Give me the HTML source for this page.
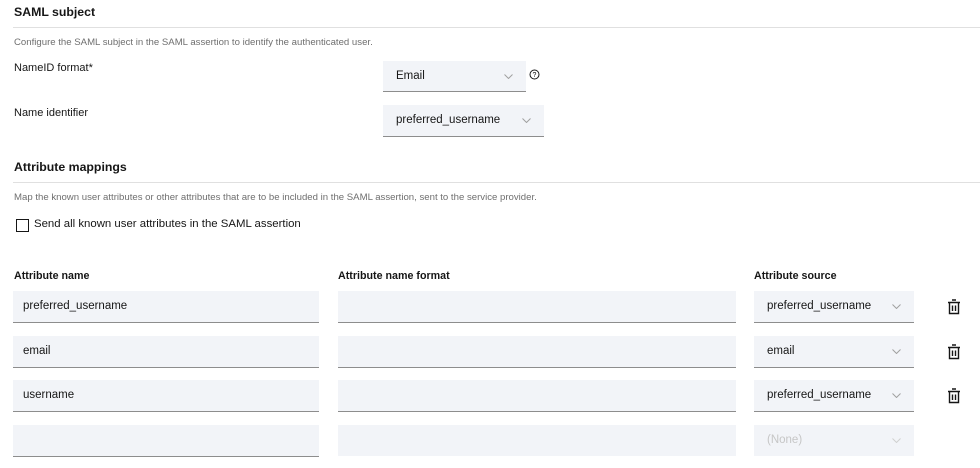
<!DOCTYPE html><html><head><style>
body{margin:0;width:980px;height:468px;background:#fff;font-family:"Liberation Sans",sans-serif;color:#161616;position:relative;overflow:hidden}
.a{position:absolute;white-space:nowrap}
.h{font-size:12.3px;font-weight:bold}
.d{font-size:9.6px;color:#6f6f6f}
.l{font-size:11px;color:#161616}
.hr{position:absolute;left:13px;right:0;height:1px;background:#e0e0e0}
.f{position:absolute;background:#f2f4f8;border-bottom:1px solid #8d8d8d;box-sizing:border-box;font-size:11.5px;line-height:31px;padding-left:10px}
.s{padding-left:13px}
.f svg{position:absolute;right:13px;top:13px}
.nb{border-bottom:none}
.t{position:absolute;left:947px}
</style></head><body>
<div class="a h" style="left:14px;top:5px">SAML subject</div>
<div class="hr" style="top:27px"></div>
<div class="a d" style="left:14px;top:37px">Configure the SAML subject in the SAML assertion to identify the authenticated user.</div>
<div class="a l" style="left:14px;top:62px">NameID format*</div>
<div class="f s" style="left:383px;top:61px;width:143px;height:31px">Email<svg width="9" height="5"><path d="M.5.5l4 4 4-4" fill="none" stroke="#a0a0a0"/></svg></div>
<svg class="a" style="left:529px;top:69px" width="11" height="11"><circle cx="5.5" cy="5.5" r="4.5" fill="none" stroke="#161616"/><text x="5.5" y="8" font-size="7" text-anchor="middle" font-family="Liberation Sans">?</text></svg>
<div class="a l" style="left:14px;top:107px">Name identifier</div>
<div class="f s" style="left:383px;top:105px;width:161px;height:32px">preferred_username<svg width="9" height="5"><path d="M.5.5l4 4 4-4" fill="none" stroke="#a0a0a0"/></svg></div>
<div class="a h" style="left:14px;top:160px">Attribute mappings</div>
<div class="hr" style="top:182px"></div>
<div class="a d" style="left:14px;top:192px">Map the known user attributes or other attributes that are to be included in the SAML assertion, sent to the service provider.</div>
<div class="a" style="left:16px;top:219px;width:11px;height:11px;border:1px solid #161616"></div>
<div class="a l" style="left:34px;top:218px;font-size:11.4px">Send all known user attributes in the SAML assertion</div>
<div class="a l" style="left:14px;top:270px;font-weight:bold;font-size:10.7px">Attribute name</div>
<div class="a l" style="left:338px;top:270px;font-weight:bold;font-size:10.7px">Attribute name format</div>
<div class="a l" style="left:754px;top:270px;font-weight:bold;font-size:10.7px">Attribute source</div>

<div class="f" style="left:13px;top:291px;width:306px;height:32px">preferred_username</div>
<div class="f" style="left:338px;top:291px;width:398px;height:32px"></div>
<div class="f s" style="left:754px;top:291px;width:160px;height:32px">preferred_username<svg width="9" height="5"><path d="M.5.5l4 4 4-4" fill="none" stroke="#a0a0a0"/></svg></div>

<div class="f" style="left:13px;top:336px;width:306px;height:32px">email</div>
<div class="f" style="left:338px;top:336px;width:398px;height:32px"></div>
<div class="f s" style="left:754px;top:336px;width:160px;height:32px">email<svg width="9" height="5"><path d="M.5.5l4 4 4-4" fill="none" stroke="#a0a0a0"/></svg></div>

<div class="f" style="left:13px;top:380px;width:306px;height:32px">username</div>
<div class="f" style="left:338px;top:380px;width:398px;height:32px"></div>
<div class="f s" style="left:754px;top:380px;width:160px;height:32px">preferred_username<svg width="9" height="5"><path d="M.5.5l4 4 4-4" fill="none" stroke="#a0a0a0"/></svg></div>

<div class="f" style="left:13px;top:425px;width:306px;height:32px"></div>
<div class="f nb" style="left:338px;top:425px;width:398px;height:31px"></div>
<div class="f s nb" style="left:754px;top:425px;width:160px;height:31px;color:#c6c6c6">(None)<svg width="9" height="5"><path d="M.5.5l4 4 4-4" fill="none" stroke="#d0d0d0"/></svg></div>

<svg class="t" style="top:299px" width="14" height="16"><path d="M5 1h4M1 3.5h12M2.5 4v10.5h9V4M5.5 6.5v5.5M8.5 6.5v5.5" fill="none" stroke="#161616" stroke-width="1.4"/></svg>
<svg class="t" style="top:344px" width="14" height="16"><path d="M5 1h4M1 3.5h12M2.5 4v10.5h9V4M5.5 6.5v5.5M8.5 6.5v5.5" fill="none" stroke="#161616" stroke-width="1.4"/></svg>
<svg class="t" style="top:388px" width="14" height="16"><path d="M5 1h4M1 3.5h12M2.5 4v10.5h9V4M5.5 6.5v5.5M8.5 6.5v5.5" fill="none" stroke="#161616" stroke-width="1.4"/></svg>
</body></html>
